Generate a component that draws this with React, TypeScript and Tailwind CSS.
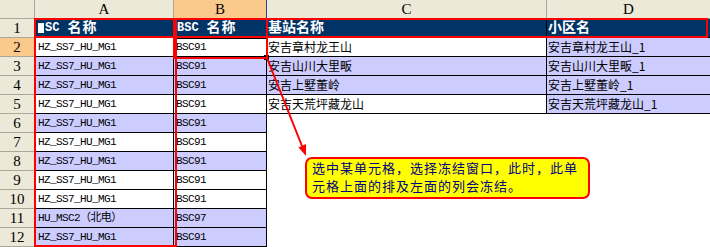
const cjk = "font-['Liberation_Mono','Noto_Sans_CJK_SC',monospace]"

type Row = {
  n: number
  a: string
  b: string
  c?: string
  d?: string
  abg: string
  cbg?: string
}

const LAV = "bg-[#ccccff]"
const WHITE = "bg-white"

const rows: Row[] = [
  { n: 2, a: "HZ_SS7_HU_MG1", b: "BSC91", c: "安吉章村龙王山", d: "安吉章村龙王山_1", abg: WHITE, cbg: WHITE },
  { n: 3, a: "HZ_SS7_HU_MG1", b: "BSC91", c: "安吉山川大里畈", d: "安吉山川大里畈_1", abg: LAV, cbg: LAV },
  { n: 4, a: "HZ_SS7_HU_MG1", b: "BSC91", c: "安吉上墅董岭", d: "安吉上墅董岭_1", abg: LAV, cbg: LAV },
  { n: 5, a: "HZ_SS7_HU_MG1", b: "BSC91", c: "安吉天荒坪藏龙山", d: "安吉天荒坪藏龙山_1", abg: WHITE, cbg: WHITE },
  { n: 6, a: "HZ_SS7_HU_MG1", b: "BSC91", abg: LAV },
  { n: 7, a: "HZ_SS7_HU_MG1", b: "BSC91", abg: WHITE },
  { n: 8, a: "HZ_SS7_HU_MG1", b: "BSC91", abg: LAV },
  { n: 9, a: "HZ_SS7_HU_MG1", b: "BSC91", abg: WHITE },
  { n: 10, a: "HZ_SS7_HU_MG1", b: "BSC91", abg: WHITE },
  { n: 11, a: "HU_MSC2（北电）", b: "BSC97", abg: LAV },
  { n: 12, a: "HZ_SS7_HU_MG1", b: "BSC91", abg: LAV },
]

function RowHead({ n, active }: { n: number | string; active?: boolean }) {
  return (
    <div
      className={`w-[35px] shrink-0 border-r border-b border-[#aca899] flex items-center justify-center font-['Liberation_Serif',serif] text-[15px] text-black ${
        active ? "bg-[#fcc98c]" : "bg-[#ece9d8]"
      }`}
    >
      {n}
    </div>
  )
}

export default function App() {
  return (
    <div className="relative w-[710px] h-[247px] overflow-hidden bg-white">
      {/* column letters */}
      <div className="flex h-[19px] font-['Liberation_Serif',serif] text-[15px] text-black">
        <div className="w-[35px] shrink-0 border-r border-b border-[#aca899] bg-[#ece9d8]" />
        <div className="w-[139px] shrink-0 border-r border-b border-[#aca899] bg-[#ece9d8] flex items-center justify-center">A</div>
        <div className="w-[93px] shrink-0 border-r border-b border-r-[#2b3f8f] border-b-[#aca899] bg-[#fcc98c] flex items-center justify-center">B</div>
        <div className="w-[280px] shrink-0 border-r border-b border-[#aca899] bg-[#ece9d8] flex items-center justify-center">C</div>
        <div className="flex-1 border-b border-[#aca899] bg-[#ece9d8] flex items-center justify-center">D</div>
      </div>

      {/* row 1 header */}
      <div className="flex h-[19px]">
        <RowHead n={1} />
        <div className={`w-[139px] shrink-0 border-r border-b border-black bg-[#003366] text-white font-bold text-[14px] leading-none flex items-center pl-[3px] ${cjk}`}>
          <span className="inline-block w-[6px] h-[10px] bg-white mr-[1px]" />
          <span className="text-[12px]">SC</span>
          <span className="ml-[8px] tracking-[1px]">名称</span>
        </div>
        <div className={`w-[93px] shrink-0 border-r border-b border-black bg-[#003366] text-white font-bold text-[14px] leading-none flex items-center pl-[3px] ${cjk}`}>
          <span className="text-[12px]">BSC</span>
          <span className="ml-[8px] tracking-[1px]">名称</span>
        </div>
        <div className={`w-[280px] shrink-0 border-r border-b border-black bg-[#003366] text-white font-bold text-[14px] leading-none flex items-center pl-[1px] ${cjk}`}>
          基站名称
        </div>
        <div className={`flex-1 border-b border-black bg-[#003366] text-white font-bold text-[14px] leading-none flex items-center pl-[1px] ${cjk}`}>
          小区名
        </div>
      </div>

      {rows.map((r) => (
        <div key={r.n} className="flex h-[19px]">
          <RowHead n={r.n} active={r.n === 2} />
          <div className={`w-[139px] shrink-0 border-r border-b border-black ${r.abg} flex items-center pl-[3px] text-[11px] tracking-[-0.6px] text-black whitespace-nowrap ${cjk}`}>
            {r.a}
          </div>
          <div className={`w-[93px] shrink-0 border-r border-b border-black ${r.abg} flex items-center pl-[2px] text-[11px] tracking-[-0.6px] text-black whitespace-nowrap ${cjk}`}>
            {r.b}
          </div>
          {r.c ? (
            <>
              <div className={`w-[280px] shrink-0 border-r border-b border-black ${r.cbg} flex items-center pl-[1px] text-[12px] text-black whitespace-nowrap font-['Noto_Sans_CJK_SC',sans-serif]`}>
                {r.c}
              </div>
              <div className="flex-1 border-b border-black bg-[#ccccff] flex items-center pl-[1px] text-[12px] text-black whitespace-nowrap font-['Noto_Sans_CJK_SC',sans-serif]">
                {r.d}
              </div>
            </>
          ) : (
            <div className="flex-1 bg-white" />
          )}
        </div>
      ))}

      {/* active cell B2 */}
      <div className="absolute left-[173px] top-[37px] w-[95px] h-[21px] border-2 border-black" />
      <div className="absolute left-[264px] top-[55px] w-[5px] h-[5px] bg-black" />

      {/* red highlight boxes */}
      <div className="absolute left-[34px] top-[18px] w-[674px] h-[20px] border-2 border-[#ff0000]" />
      <div className="absolute left-[34px] top-[18px] w-[143px] h-[229px] border-2 border-[#ff0000]" />
      <div className="absolute left-[173px] top-[18px] w-[95px] h-[41px] border-2 border-[#ff0000]" />

      {/* arrow */}
      <svg className="absolute left-0 top-0 pointer-events-none" width="710" height="247">
        <line x1="267" y1="58" x2="302" y2="146" stroke="#ff0000" strokeWidth="2" />
        <polygon points="306,156 306,144 298.5,147.5" fill="#ff0000" />
      </svg>

      {/* callout */}
      <div className="absolute left-[305px] top-[157px] w-[285px] h-[42px] rounded-[7px] border-2 border-[#ff0000] bg-[#ffff00] pl-[5px] pt-0 text-[13px] leading-[18px] tracking-[1px] text-[#000080] font-['Noto_Sans_CJK_SC',sans-serif]">
        <div className="whitespace-nowrap">选中某单元格，选择冻结窗口，此时，此单</div>
        <div className="whitespace-nowrap">元格上面的排及左面的列会冻结。</div>
      </div>
    </div>
  )
}
